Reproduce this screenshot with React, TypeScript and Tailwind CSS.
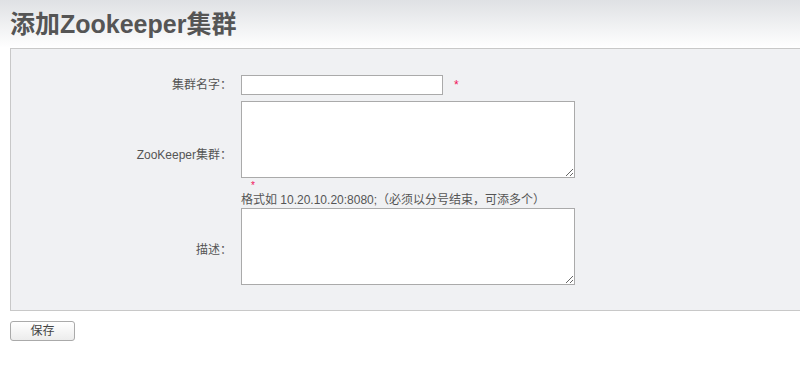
import React from "react";

export default function App() {
  const font = { fontFamily: '"Liberation Sans", "Noto Sans CJK SC", sans-serif' };
  return (
    <div className="w-[800px] h-[365px] bg-white overflow-hidden text-[12px] text-[#555]" style={font}>
      <div className="h-[48px] bg-gradient-to-b from-[#dfe1e4] to-[#ffffff] pl-[10px] pt-[6px]">
        <h1 className="text-[25px] font-bold text-[#555] leading-[36px] tracking-[0px]">添加Zookeeper集群</h1>
      </div>
      <div className="ml-[10px] w-[800px] bg-[#f0f1f3] border border-[#c8c8c8] border-r-0 pt-[26px] pb-[25px]">
        <div className="grid grid-cols-[230px_1fr] items-center gap-y-[6px]">
          <div className="text-right pr-[9px]">集群名字：</div>
          <div className="flex items-center">
            <input className="w-[202px] h-[20px] bg-white border border-[#aaa] outline-none" />
            <span className="ml-[11px] text-[#f0145a] text-[12px] leading-none">*</span>
          </div>
          <div className="text-right pr-[9px]">ZooKeeper集群：</div>
          <div className="flex flex-col">
            <textarea className="block w-[334px] h-[77px] bg-white border border-[#aaa] outline-none" />
            <span className="ml-[10px] text-[#f0145a] text-[10px] leading-[12px] h-[12px] mt-[2px]">*</span>
            <span className="leading-[16px] text-[#555]">格式如 10.20.10.20:8080;（必须以分号结束，可添多个）</span>
          </div>
          <div className="text-right pr-[9px]">描述：</div>
          <div className="-mt-[6px]">
            <textarea className="block w-[334px] h-[77px] bg-white border border-[#aaa] outline-none" />
          </div>
        </div>
      </div>
      <div className="pl-[10px] pt-[10px]">
        <button className="w-[65px] h-[20px] rounded-[3px] border border-[#aaa] bg-gradient-to-b from-[#ffffff] to-[#ececec] text-[12px] text-[#444] leading-[18px]">
          保存
        </button>
      </div>
    </div>
  );
}
